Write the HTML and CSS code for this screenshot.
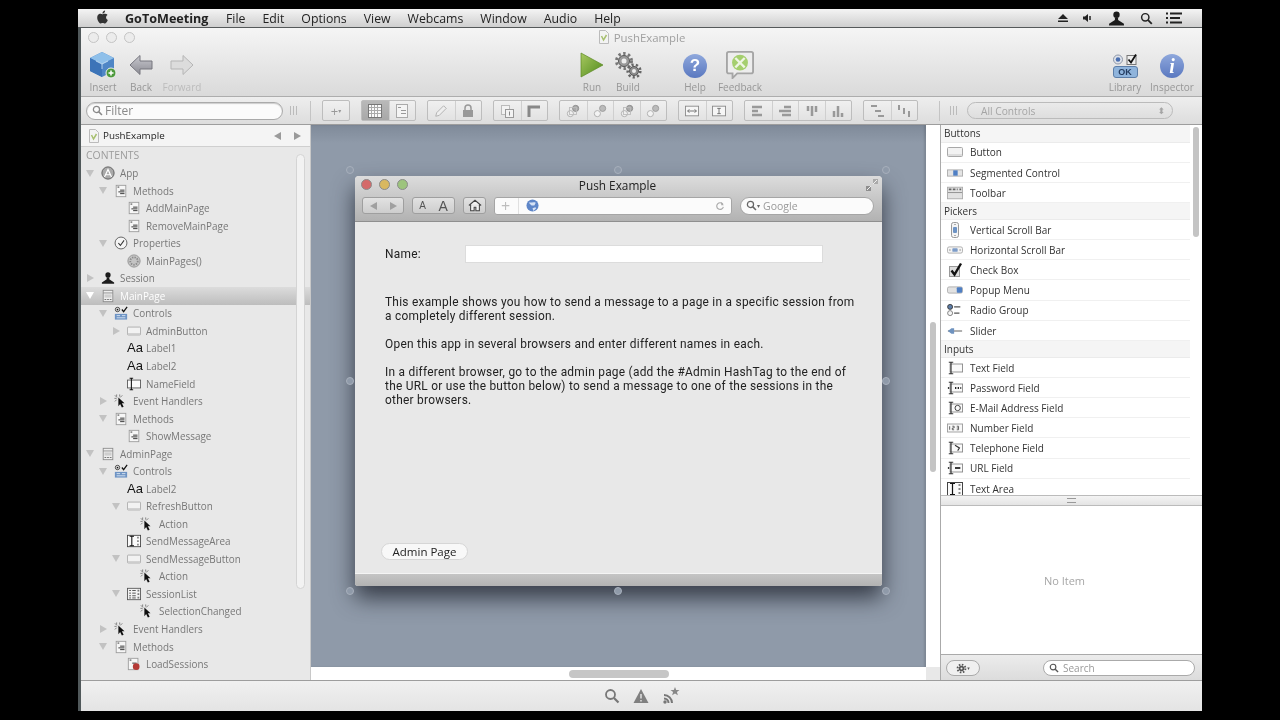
FILE: index.html
```html
<!DOCTYPE html>
<html lang="en">
  <head>
    <meta charset="UTF-8" />
    <title>PushExample</title>
    <link rel="stylesheet" href="styles.css">
  </head>
  <body>
    <!-- shared icons -->
    <svg class="defs" width="0" height="0">
      <defs>
        <linearGradient id="g-green" x1="0" y1="0" x2="1" y2="1"><stop offset="0" stop-color="#a8c860"/><stop offset="1" stop-color="#4f8a1c"/></linearGradient>
        <linearGradient id="g-arrow" x1="0" y1="0" x2="0" y2="1"><stop offset="0" stop-color="#c9c9cf"/><stop offset="1" stop-color="#8b8b93"/></linearGradient>
      </defs>
      <symbol id="i-apple" viewBox="0 0 16 16"><path d="M11.182.008C11.148-.03 9.923.023 8.857 1.18c-1.066 1.156-.902 2.482-.878 2.516s1.52.087 2.475-1.258.762-2.391.728-2.43m3.314 11.733c-.048-.096-2.325-1.234-2.113-3.422s1.675-2.789 1.698-2.854-.597-.79-1.254-1.157a3.7 3.7 0 0 0-1.563-.434c-.108-.003-.483-.095-1.254.116-.508.139-1.653.589-1.968.607-.316.018-1.256-.522-2.267-.665-.647-.1-1.333.105-1.824.303-.49.196-1.422.754-2.074 2.237-.652 1.482-.311 3.83-.067 4.56s.625 1.924 1.273 2.796c.576.984 1.34 1.667 1.659 1.899s1.219.386 1.843.067c.502-.308 1.408-.485 1.766-.472.357.013 1.061.154 1.782.539.571.197 1.111.115 1.652-.105.541-.221 1.324-1.059 2.238-2.758q.52-1.185.473-1.282" fill="#333"/></symbol>
      <symbol id="i-eject" viewBox="0 0 12 12"><path d="M6 2l5 5H1zM1 8.500h10V10H1z" fill="#222"/></symbol>
      <symbol id="i-volume" viewBox="0 0 12 12"><path d="M1 4.500h2L6 2v8L3 7.500H1z" fill="#222"/><path d="M8 4v4" stroke="#222" stroke-width="1.500"/></symbol>
      <symbol id="i-person" viewBox="0 0 16 16"><circle cx="8" cy="4.500" r="3" fill="#1c1c1c"/><path d="M6.500 7h3v2.500L15 13v1.500H1V13l5.500-3.500z" fill="#1c1c1c"/></symbol>
      <symbol id="i-search" viewBox="0 0 16 16"><circle cx="6.500" cy="6.500" r="4.500" fill="none" stroke="currentColor" stroke-width="1.800"/><path d="M10 10l4.500 4.500" stroke="currentColor" stroke-width="2.200"/></symbol>
      <symbol id="i-lines" viewBox="0 0 18 12"><path d="M1 1.500h2M5 1.500h12M1 6h2M5 6h10M1 10.500h2M5 10.500h12" stroke="#222" stroke-width="2"/></symbol>
      <symbol id="i-doc" viewBox="0 0 12 14"><path d="M1.500.500h6l3 3v10h-9z" fill="#f3f3f3" stroke="#bbb"/><path d="M3.500 6l2 4 3-5" fill="none" stroke="#a8c070" stroke-width="1.500"/></symbol>

      <symbol id="i-cube" viewBox="0 0 28 28"><path d="M13 1L25 7v13l-12 6-12-6V7z" fill="#4f86c6"/><path d="M13 1L25 7l-12 6L1 7z" fill="#8fc0ea"/><path d="M1 7l12 6v13L1 20z" fill="#3c74b8"/><path d="M13 13v5M13 13l-6-3M13 13l6-3" stroke="#cfe6f7" stroke-width=".8"/><circle cx="22" cy="22" r="5" fill="#4d9a3c" stroke="#eee"/><path d="M22 19.500v5M19.500 22h5" stroke="#fff" stroke-width="1.500"/></symbol>
      <symbol id="i-back" viewBox="0 0 24 22"><path d="M1 11L11 1.500V7h12v8H11v5.500z" fill="url(#g-arrow)" stroke="#77777f"/></symbol>
      <symbol id="i-forward" viewBox="0 0 24 22"><path d="M23 11L13 1.500V7H1v8h12v5.500z" fill="#dcdcdc" stroke="#b5b5b5"/></symbol>
      <symbol id="i-run" viewBox="0 0 24 26"><path d="M1 1l22 12L1 25z" fill="url(#g-green)" stroke="#5c8a24" stroke-width=".7"/></symbol>
      <symbol id="i-gears" viewBox="0 0 30 28"><circle cx="11" cy="10" r="5.500" fill="#9a9a9a" stroke="#555" stroke-width="1"/><circle cx="11" cy="10" r="7.500" fill="none" stroke="#777" stroke-width="3" stroke-dasharray="2.400 2.500"/><circle cx="11" cy="10" r="2.500" fill="#eee"/><circle cx="21" cy="20" r="4.500" fill="#8d8d8d" stroke="#555"/><circle cx="21" cy="20" r="6.300" fill="none" stroke="#666" stroke-width="2.600" stroke-dasharray="2.200 2.200"/><circle cx="21" cy="20" r="2" fill="#eee"/></symbol>
      <symbol id="i-feedback" viewBox="0 0 30 30"><path d="M3 1h24a2 2 0 0 1 2 2v19a2 2 0 0 1-2 2H12l-5 5v-5H3a2 2 0 0 1-2-2V3a2 2 0 0 1 2-2z" fill="#ededed" stroke="#a5a5a5" stroke-width="2"/><circle cx="15" cy="12.500" r="8.500" fill="#a5cf6e"/><path d="M10 7.500l10 10M20 7.500l-10 10" stroke="#eef5e2" stroke-width="2.500"/></symbol>
      <symbol id="i-library" viewBox="0 0 26 11"><circle cx="6" cy="5.500" r="4.500" fill="#dfe3ea" stroke="#8c96a8"/><circle cx="6" cy="5.500" r="2.300" fill="#4a6fb0"/><rect x="15" y="1.500" width="9" height="9" fill="#eee" stroke="#777"/><path d="M16.500 5.500l2.500 3L24 .500" fill="none" stroke="#111" stroke-width="1.800"/></symbol>

      <symbol id="t-app" viewBox="0 0 16 16"><circle cx="8" cy="8" r="7" fill="#a9a9a9" stroke="#555"/><path d="M4 12.500L8 4l4 8.500M5.500 10h5" fill="none" stroke="#fff" stroke-width="1.400"/></symbol>
      <symbol id="t-method" viewBox="0 0 16 16"><rect x="2.500" y="1.500" width="11" height="13" fill="#f6f6f6" stroke="#9a9a9a"/><path d="M4 3.500h2M7 7h5M5 9h7M7 11h5" stroke="#222"/></symbol>
      <symbol id="t-method-red" viewBox="0 0 16 16"><rect x="1.500" y="1.500" width="11" height="13" fill="#f6f6f6" stroke="#9a9a9a"/><path d="M3 3.500h2M6 7h5" stroke="#222"/><circle cx="10.500" cy="11" r="3.800" fill="#b53a36"/></symbol>
      <symbol id="t-check" viewBox="0 0 16 16"><circle cx="8" cy="8" r="6.800" fill="#f4f4f4" stroke="#555"/><path d="M5 8l2.300 2.800L11.500 5" fill="none" stroke="#333" stroke-width="1.200"/></symbol>
      <symbol id="t-gear" viewBox="0 0 16 16"><circle cx="8" cy="8" r="7" fill="#c4c4c4" stroke="#909090"/><circle cx="8" cy="8" r="4.300" fill="none" stroke="#8a8a8a" stroke-width="2" stroke-dasharray="1.600 1.300"/></symbol>
      <symbol id="t-page" viewBox="0 0 16 16"><rect x="2.500" y="1.500" width="11" height="13" fill="#eee" stroke="#8a8a8a"/><path d="M2.500 4.500h11" stroke="#8a8a8a"/><path d="M4 7h8M4 9h8" stroke="#b5b5b5"/><path d="M4 12h2M7 12h2M10 12h2" stroke="#666"/></symbol>
      <symbol id="t-controls" viewBox="0 0 16 16"><circle cx="4" cy="4" r="2.500" fill="#eee" stroke="#333"/><circle cx="4" cy="4" r="1" fill="#111"/><path d="M9 4l2 2.500L15 1" fill="none" stroke="#111" stroke-width="1.400"/><rect x="1" y="9" width="14" height="6.500" fill="#6d93c4"/><path d="M3 11h4M9 11h4M3 13.500h10" stroke="#dfe9f5"/></symbol>
      <symbol id="t-button" viewBox="0 0 16 16"><rect x=".500" y="3.500" width="15" height="9" rx="1" fill="#f2f2f2" stroke="#a8a8a8"/><path d="M1 11h14" stroke="#c8c8c8"/></symbol>
      <symbol id="t-field" viewBox="0 0 16 16"><rect x=".500" y="3.500" width="15" height="9" fill="#fafafa" stroke="#555"/><path d="M3 1.500h4M3 14.500h4M5 1.500v13" stroke="#111" stroke-width="1.200"/></symbol>
      <symbol id="t-area" viewBox="0 0 16 16"><rect x=".500" y="1.500" width="15" height="13" fill="#fafafa" stroke="#444"/><path d="M3 2.500h5M3 13.500h5M5.500 2.500v11" stroke="#111" stroke-width="1.200"/><path d="M12.500 3v10" stroke="#888" stroke-width="2" stroke-dasharray="2 2"/></symbol>
      <symbol id="t-list" viewBox="0 0 16 16"><rect x=".500" y="1.500" width="15" height="13" fill="#f2f2f2" stroke="#555"/><path d="M2.500 4h2M6 4h4M2.500 7h2M6 7h4M2.500 10h2M6 10h4M2.500 12.500h2M6 12.500h4" stroke="#444"/><path d="M13 3v10" stroke="#777" stroke-width="2" stroke-dasharray="2 2"/></symbol>
      <symbol id="t-event" viewBox="0 0 16 16"><path d="M3 .500v2.500M.500 5H3M1 1.500l2.500 2.500M6.500 .500V3M9.500 1.500L7 4M1 8.500L3 6.500" stroke="#777"/><path d="M5 4l7 6.500H9l2 4-2 1-2-4-2 2.500z" fill="#111"/></symbol>

      <symbol id="l-seg" viewBox="0 0 18 12"><rect x=".500" y="2.500" width="17" height="7" fill="#e4e4e4" stroke="#aaa"/><rect x="7" y="3" width="5" height="6" fill="#4f7fc4"/></symbol>
      <symbol id="l-toolbar" viewBox="0 0 18 14"><rect x=".500" y=".500" width="17" height="13" fill="#e2e2e2" stroke="#aaa"/><path d="M2 3h3M6.500 3h3M11 3h1M14 3h2" stroke="#666" stroke-width="2"/><path d="M1 6.500h16" stroke="#888"/></symbol>
      <symbol id="l-vscroll" viewBox="0 0 12 16"><rect x="2.500" y=".500" width="7" height="15" rx="2" fill="#f4f4f4" stroke="#999"/><rect x="4" y="5" width="4" height="6" rx="1" fill="#6d93c4"/><path d="M6 2v1M6 13v1" stroke="#666"/></symbol>
      <symbol id="l-hscroll" viewBox="0 0 18 10"><rect x=".500" y="1.500" width="17" height="7" rx="2" fill="#f4f4f4" stroke="#aaa"/><rect x="6" y="3" width="6" height="4" rx="1" fill="#7d9cc8"/><path d="M2.500 5h1.500M14 5h1.500" stroke="#666"/></symbol>
      <symbol id="l-checkbox" viewBox="0 0 16 16"><rect x="2.500" y="4.500" width="10" height="10" fill="#ddd" stroke="#999"/><path d="M4.500 8.500l3 4L14 1.500" fill="none" stroke="#111" stroke-width="2.400"/></symbol>
      <symbol id="l-popup" viewBox="0 0 18 12"><rect x=".500" y="2.500" width="17" height="7" rx="2" fill="#e2e2e2" stroke="#aaa"/><rect x="11" y="3" width="6" height="6" rx="1" fill="#4f7fc4"/></symbol>
      <symbol id="l-radio" viewBox="0 0 18 14"><circle cx="3.500" cy="3.500" r="2.800" fill="#5d7da8" stroke="#333"/><circle cx="3.500" cy="10.500" r="2.800" fill="#f5f5f5" stroke="#777"/><path d="M8 3.500h7M8 10.500h6" stroke="#555" stroke-width="1.500"/></symbol>
      <symbol id="l-slider" viewBox="0 0 18 10"><path d="M1 5h16" stroke="#888" stroke-width="1.500"/><path d="M1 5l4-3h3v6H5z" fill="#6f93bf"/></symbol>
      <symbol id="l-field" viewBox="0 0 18 16"><rect x="3.500" y="3.500" width="14" height="9" fill="#fafafa" stroke="#888"/><path d="M2 1.500h5M2 14.500h5M4.500 1.500v13" stroke="#333" stroke-width="1.300"/></symbol>
      <symbol id="l-password" viewBox="0 0 18 16"><rect x="3.500" y="3.500" width="14" height="9" fill="#fafafa" stroke="#888"/><path d="M2 1.500h5M2 14.500h5M4.500 1.500v13" stroke="#333" stroke-width="1.300"/><path d="M9 8h1.500M12 8h1.500M15 8h1" stroke="#222" stroke-width="2"/><path d="M1 8h1.500" stroke="#222" stroke-width="2"/></symbol>
      <symbol id="l-email" viewBox="0 0 18 16"><rect x="3.500" y="3.500" width="14" height="9" fill="#fafafa" stroke="#888"/><path d="M2 1.500h5M2 14.500h5M4.500 1.500v13" stroke="#333" stroke-width="1.300"/><circle cx="12" cy="8" r="3" fill="none" stroke="#333"/></symbol>
      <symbol id="l-number" viewBox="0 0 18 12"><rect x=".500" y="1.500" width="17" height="9" fill="#f8f8f8" stroke="#999"/><path d="M3 4v4M6 4h2v2H6v2h2M11 4h2v2h-2M11 8h2v-2" fill="none" stroke="#555"/></symbol>
      <symbol id="l-tel" viewBox="0 0 18 16"><rect x="3.500" y="3.500" width="14" height="9" fill="#fafafa" stroke="#888"/><path d="M2 1.500h5M2 14.500h5M4.500 1.500v13" stroke="#333" stroke-width="1.300"/><path d="M9 5l5 3-2 3" fill="none" stroke="#333" stroke-width="1.300"/></symbol>
      <symbol id="l-url" viewBox="0 0 18 16"><rect x="3.500" y="3.500" width="14" height="9" fill="#fafafa" stroke="#888"/><path d="M2 1.500h5M2 14.500h5M4.500 1.500v13" stroke="#333" stroke-width="1.300"/><path d="M9 8h6" stroke="#222" stroke-width="2"/><path d="M1 8h1.500" stroke="#222" stroke-width="2"/></symbol>

      <symbol id="s-grid" viewBox="0 0 14 14"><rect x=".500" y=".500" width="13" height="13" fill="#fafafa" stroke="#777"/><path d="M3.500 1v12M6.500 1v12M9.500 1v12M1 3.500h12M1 6.500h12M1 9.500h12" stroke="#aaa"/></symbol>
      <symbol id="s-list" viewBox="0 0 14 14"><rect x="1.500" y=".500" width="11" height="13" fill="#f4f4f4" stroke="#aaa"/><path d="M3 3.500h3M6 6.500h5M6 9.500h5" stroke="#999"/></symbol>
      <symbol id="s-pencil" viewBox="0 0 16 16"><path d="M2 14l1-4 8-8 3 3-8 8z" fill="#eee" stroke="#aaa"/></symbol>
      <symbol id="s-lock" viewBox="0 0 14 14"><rect x="2" y="6" width="10" height="7" fill="#999"/><path d="M4 6V4a3 3 0 0 1 6 0v2" fill="none" stroke="#999" stroke-width="1.500"/></symbol>
      <symbol id="s-insert" viewBox="0 0 14 14"><rect x="1.500" y="1.500" width="8" height="9" fill="#f3f3f3" stroke="#bbb"/><rect x="5.500" y="5.500" width="8" height="8" fill="#f3f3f3" stroke="#999"/><path d="M9.500 7.500v4" stroke="#888"/></symbol>
      <symbol id="s-corner" viewBox="0 0 14 14"><path d="M2 13V3h11" fill="none" stroke="#888" stroke-width="3"/></symbol>
      <symbol id="s-front" viewBox="0 0 16 16"><circle cx="5" cy="11" r="3.500" fill="#eee" stroke="#aaa"/><circle cx="11" cy="5" r="3.500" fill="#aaa" stroke="#888"/><rect x="4" y="4" width="8" height="8" fill="none" stroke="#bbb"/></symbol>
      <symbol id="s-back" viewBox="0 0 16 16"><circle cx="5" cy="11" r="3.500" fill="#f3f3f3" stroke="#aaa"/><circle cx="11" cy="5" r="3.500" fill="#bbb" stroke="#999"/></symbol>
      <symbol id="s-hsize" viewBox="0 0 16 12"><rect x=".500" y=".500" width="15" height="11" fill="#f6f6f6" stroke="#888"/><path d="M3 6h10M3 6l2-2M3 6l2 2M13 6l-2-2M13 6l-2 2" fill="none" stroke="#666"/></symbol>
      <symbol id="s-vsize" viewBox="0 0 16 12"><rect x=".500" y=".500" width="15" height="11" fill="#f6f6f6" stroke="#888"/><path d="M6 3h4M8 3v6M6 9h4" fill="none" stroke="#666"/></symbol>
      <symbol id="s-alignl" viewBox="0 0 14 14"><path d="M1 3h10M1 7h6M1 11h10" stroke="#999" stroke-width="2.500"/></symbol>
      <symbol id="s-alignc" viewBox="0 0 14 14"><path d="M6 3h7M1 7h12M4 11h9" stroke="#999" stroke-width="2.500"/></symbol>
      <symbol id="s-alignt" viewBox="0 0 14 14"><path d="M3 2v5M7 2v10M11 2v6" stroke="#999" stroke-width="2.500"/></symbol>
      <symbol id="s-alignb" viewBox="0 0 14 14"><path d="M3 13V7M7 13V2M11 13V9" stroke="#999" stroke-width="2.500"/></symbol>
      <symbol id="s-stepd" viewBox="0 0 14 14"><path d="M1 2h6M5 7h6M8 12h6" stroke="#999" stroke-width="2"/></symbol>
      <symbol id="s-stepr" viewBox="0 0 14 14"><path d="M2 1v5M7 4v6M12 7v6" stroke="#999" stroke-width="2"/></symbol>

      <symbol id="w-home" viewBox="0 0 16 14"><path d="M1 7l7-6 7 6M3 6v7h4V9h2v4h4V6" fill="#f2f2f2" stroke="#444" stroke-width="1.200"/></symbol>
      <symbol id="w-globe" viewBox="0 0 14 14"><circle cx="7" cy="7" r="6.500" fill="#5e86c8"/><path d="M3 3.500c2 1 5-1 7.500.5L9 7H6L4 5z" fill="#d6e2f5"/><path d="M7 10l3-1 1 1-3 3z" fill="#d6e2f5"/></symbol>
      <symbol id="w-reload" viewBox="0 0 12 12"><path d="M9.500 4a4 4 0 1 0 .5 3" fill="none" stroke="#aaa" stroke-width="1.400"/><path d="M7.500 1v4h3z" fill="#aaa"/></symbol>
      <symbol id="w-resize" viewBox="0 0 14 14"><rect x="1" y="8" width="5" height="5" fill="#8e8e8e"/><rect x="8" y="1" width="5" height="5" fill="#aaa"/><path d="M2 12l4-4M8 6l4-4" stroke="#eee"/></symbol>
      <symbol id="b-gear" viewBox="0 0 14 14"><circle cx="7" cy="7" r="3.500" fill="#555"/><circle cx="7" cy="7" r="5" fill="none" stroke="#555" stroke-width="2.400" stroke-dasharray="2 1.900"/><circle cx="7" cy="7" r="1.300" fill="#eee"/></symbol>
      <symbol id="b-warn" viewBox="0 0 16 16"><path d="M8 1l7.500 14H.5z" fill="#808080"/><path d="M8 6v4.500M8 12v1.500" stroke="#e8e8e8" stroke-width="1.400"/></symbol>
      <symbol id="b-feed" viewBox="0 0 18 18"><path d="M2 8a8 8 0 0 1 8 8M2 11.500A4.500 4.500 0 0 1 6.500 16" fill="none" stroke="#777" stroke-width="2"/><circle cx="3" cy="15" r="1.700" fill="#777"/><path d="M13 0l1.200 3h3.300l-2.600 2 1 3.300L13 6.500l-2.900 1.800 1-3.300-2.600-2h3.300z" fill="#888"/></symbol>
    </svg>

    <div class="screen">
      <div class="menubar">
        <svg class="apple"><use href="#i-apple"/></svg>
        <span class="menu-app">GoToMeeting</span>
        <span>File</span>
        <span>Edit</span>
        <span>Options</span>
        <span>View</span>
        <span>Webcams</span>
        <span>Window</span>
        <span>Audio</span>
        <span>Help</span>
        <div class="menu-status">
          <svg class="st-eject"><use href="#i-eject"/></svg>
          <svg class="st-volume"><use href="#i-volume"/></svg>
          <svg class="st-person"><use href="#i-person"/></svg>
          <svg class="st-search"><use href="#i-search"/></svg>
          <svg class="st-lines"><use href="#i-lines"/></svg>
        </div>
      </div>

      <div class="window">
        <div class="toolbar">
          <div class="titlebar">
            <div class="lights"><i></i><i></i><i></i></div>
            <svg class="title-doc"><use href="#i-doc"/></svg>
            <span>PushExample</span>
          </div>
          <div class="tools">
            <div class="tool w-insert"><svg class="ti-cube"><use href="#i-cube"/></svg><span>Insert</span></div>
            <div class="tool w-back"><svg class="ti-arrow"><use href="#i-back"/></svg><span>Back</span></div>
            <div class="tool w-forward off"><svg class="ti-arrow"><use href="#i-forward"/></svg><span>Forward</span></div>
            <div class="tool w-run"><svg class="ti-run"><use href="#i-run"/></svg><span>Run</span></div>
            <div class="tool w-build"><svg class="ti-gears"><use href="#i-gears"/></svg><span>Build</span></div>
            <div class="tool w-help"><div class="round">?</div><span>Help</span></div>
            <div class="tool w-feedback"><svg class="ti-feedback"><use href="#i-feedback"/></svg><span>Feedback</span></div>
            <div class="tool w-library">
              <svg class="ti-library"><use href="#i-library"/></svg>
              <div class="ok-icon">OK</div>
              <span>Library</span>
            </div>
            <div class="tool w-inspector"><div class="round round-i">i</div><span>Inspector</span></div>
          </div>
        </div>

        <div class="strip">
          <div class="filter"><svg class="filter-icon"><use href="#i-search"/></svg>Filter</div>
          <div class="grip"></div>
          <div class="strip-sep"></div>
          <div class="btn-groups">
            <div class="btn-group"><div class="seg seg-wide">+<small>▾</small></div></div>
            <div class="btn-group">
              <div class="seg seg-on"><svg><use href="#s-grid"/></svg></div>
              <div class="seg"><svg><use href="#s-list"/></svg></div>
            </div>
            <div class="btn-group">
              <div class="seg"><svg><use href="#s-pencil"/></svg></div>
              <div class="seg"><svg><use href="#s-lock"/></svg></div>
            </div>
            <div class="btn-group">
              <div class="seg"><svg><use href="#s-insert"/></svg></div>
              <div class="seg"><svg><use href="#s-corner"/></svg></div>
            </div>
            <div class="btn-group">
              <div class="seg"><svg><use href="#s-front"/></svg></div>
              <div class="seg"><svg><use href="#s-back"/></svg></div>
              <div class="seg"><svg><use href="#s-front"/></svg></div>
              <div class="seg"><svg><use href="#s-back"/></svg></div>
            </div>
            <div class="btn-group">
              <div class="seg"><svg><use href="#s-hsize"/></svg></div>
              <div class="seg"><svg><use href="#s-vsize"/></svg></div>
            </div>
            <div class="btn-group">
              <div class="seg"><svg><use href="#s-alignl"/></svg></div>
              <div class="seg"><svg><use href="#s-alignc"/></svg></div>
              <div class="seg"><svg><use href="#s-alignt"/></svg></div>
              <div class="seg"><svg><use href="#s-alignb"/></svg></div>
            </div>
            <div class="btn-group">
              <div class="seg"><svg><use href="#s-stepd"/></svg></div>
              <div class="seg"><svg><use href="#s-stepr"/></svg></div>
            </div>
          </div>
          <div class="strip-sep strip-sep-right"></div>
          <div class="grip grip-right"></div>
          <div class="controls-popup"><span>All Controls</span><b>⬍</b></div>
        </div>

        <div class="main">
          <div class="sidebar">
            <div class="sidebar-head">
              <svg class="head-doc"><use href="#i-doc"/></svg>
              <span>PushExample</span>
              <div class="head-nav"><i class="nav-l"></i><i class="nav-r"></i></div>
            </div>
            <div class="contents">CONTENTS</div>
            <div class="tree">
              <div class="row d0"><i class="open"></i><svg><use href="#t-app"/></svg><span>App</span></div>
              <div class="row d1"><i class="open"></i><svg><use href="#t-method"/></svg><span>Methods</span></div>
              <div class="row d2"><i></i><svg><use href="#t-method"/></svg><span>AddMainPage</span></div>
              <div class="row d2"><i></i><svg><use href="#t-method"/></svg><span>RemoveMainPage</span></div>
              <div class="row d1"><i class="open"></i><svg><use href="#t-check"/></svg><span>Properties</span></div>
              <div class="row d2"><i></i><svg><use href="#t-gear"/></svg><span>MainPages()</span></div>
              <div class="row d0"><i class="closed"></i><svg><use href="#i-person"/></svg><span>Session</span></div>
              <div class="row d0 selected"><i class="open"></i><svg><use href="#t-page"/></svg><span>MainPage</span></div>
              <div class="row d1"><i class="open"></i><svg><use href="#t-controls"/></svg><span>Controls</span></div>
              <div class="row d2"><i class="closed"></i><svg><use href="#t-button"/></svg><span>AdminButton</span></div>
              <div class="row d2"><i></i><b class="aa">Aa</b><span>Label1</span></div>
              <div class="row d2"><i></i><b class="aa">Aa</b><span>Label2</span></div>
              <div class="row d2"><i></i><svg><use href="#t-field"/></svg><span>NameField</span></div>
              <div class="row d1"><i class="closed"></i><svg><use href="#t-event"/></svg><span>Event Handlers</span></div>
              <div class="row d1"><i class="open"></i><svg><use href="#t-method"/></svg><span>Methods</span></div>
              <div class="row d2"><i></i><svg><use href="#t-method"/></svg><span>ShowMessage</span></div>
              <div class="row d0"><i class="open"></i><svg><use href="#t-page"/></svg><span>AdminPage</span></div>
              <div class="row d1"><i class="open"></i><svg><use href="#t-controls"/></svg><span>Controls</span></div>
              <div class="row d2"><i></i><b class="aa">Aa</b><span>Label2</span></div>
              <div class="row d2"><i class="open"></i><svg><use href="#t-button"/></svg><span>RefreshButton</span></div>
              <div class="row d3"><i></i><svg><use href="#t-event"/></svg><span>Action</span></div>
              <div class="row d2"><i></i><svg><use href="#t-area"/></svg><span>SendMessageArea</span></div>
              <div class="row d2"><i class="open"></i><svg><use href="#t-button"/></svg><span>SendMessageButton</span></div>
              <div class="row d3"><i></i><svg><use href="#t-event"/></svg><span>Action</span></div>
              <div class="row d2"><i class="open"></i><svg><use href="#t-list"/></svg><span>SessionList</span></div>
              <div class="row d3"><i></i><svg><use href="#t-event"/></svg><span>SelectionChanged</span></div>
              <div class="row d1"><i class="closed"></i><svg><use href="#t-event"/></svg><span>Event Handlers</span></div>
              <div class="row d1"><i class="open"></i><svg><use href="#t-method"/></svg><span>Methods</span></div>
              <div class="row d2"><i></i><svg><use href="#t-method-red"/></svg><span>LoadSessions</span></div>
            </div>
            <div class="tree-scroll"></div>
          </div>

          <div class="center">
            <div class="center-top">
              <div class="canvas">
                <div class="selection">
                  <i class="h h-tl"></i><i class="h h-tc"></i><i class="h h-tr"></i>
                  <i class="h h-ml"></i><i class="h h-mr"></i>
                  <i class="h h-bl"></i><i class="h h-bc"></i><i class="h h-br"></i>
                </div>
                <div class="webwin">
                  <div class="webwin-top">
                    <div class="webwin-title">
                      <div class="web-lights"><i class="red"></i><i class="yellow"></i><i class="green"></i></div>
                      <span>Push Example</span>
                      <svg class="web-resize"><use href="#w-resize"/></svg>
                    </div>
                    <div class="webwin-bar">
                      <div class="wb wb-nav"><i class="wnav-l"></i><i class="wnav-r"></i></div>
                      <div class="wb wb-font"><span>A</span><span class="big">A</span></div>
                      <div class="wb wb-home"><svg><use href="#w-home"/></svg></div>
                      <div class="url">
                        <span class="url-plus">+</span>
                        <svg class="url-globe"><use href="#w-globe"/></svg>
                        <svg class="url-reload"><use href="#w-reload"/></svg>
                      </div>
                      <div class="google"><svg><use href="#i-search"/></svg><small>▾</small><span>Google</span></div>
                    </div>
                  </div>
                  <div class="webwin-body">
                    <div class="name-row"><label>Name:</label><div class="name-input"></div></div>
                    <p class="first">This example shows you how to send a message to a page in a specific session from<br>a completely different session.</p>
                    <p>Open this app in several browsers and enter different names in each.</p>
                    <p>In a different browser, go to the admin page (add the #Admin HashTag to the end of<br>the URL or use the button below) to send a message to one of the sessions in the<br>other browsers.</p>
                    <div class="admin-btn">Admin Page</div>
                  </div>
                  <div class="webwin-foot"></div>
                </div>
              </div>
              <div class="vscroll"><div class="vthumb"></div></div>
            </div>
            <div class="hscroll"><div class="hthumb"></div></div>
          </div>

          <div class="library">
            <div class="lib-list">
              <div class="lib-head">Buttons</div>
              <div class="lib-row"><svg><use href="#t-button"/></svg>Button</div>
              <div class="lib-row"><svg><use href="#l-seg"/></svg>Segmented Control</div>
              <div class="lib-row"><svg><use href="#l-toolbar"/></svg>Toolbar</div>
              <div class="lib-head">Pickers</div>
              <div class="lib-row"><svg><use href="#l-vscroll"/></svg>Vertical Scroll Bar</div>
              <div class="lib-row"><svg><use href="#l-hscroll"/></svg>Horizontal Scroll Bar</div>
              <div class="lib-row"><svg><use href="#l-checkbox"/></svg>Check Box</div>
              <div class="lib-row"><svg><use href="#l-popup"/></svg>Popup Menu</div>
              <div class="lib-row"><svg><use href="#l-radio"/></svg>Radio Group</div>
              <div class="lib-row"><svg><use href="#l-slider"/></svg>Slider</div>
              <div class="lib-head">Inputs</div>
              <div class="lib-row"><svg><use href="#l-field"/></svg>Text Field</div>
              <div class="lib-row"><svg><use href="#l-password"/></svg>Password Field</div>
              <div class="lib-row"><svg><use href="#l-email"/></svg>E-Mail Address Field</div>
              <div class="lib-row"><svg><use href="#l-number"/></svg>Number Field</div>
              <div class="lib-row"><svg><use href="#l-tel"/></svg>Telephone Field</div>
              <div class="lib-row"><svg><use href="#l-url"/></svg>URL Field</div>
              <div class="lib-row"><svg><use href="#t-area"/></svg>Text Area</div>
              <div class="lib-thumb"></div>
            </div>
            <div class="lib-divider"><i></i></div>
            <div class="lib-empty">No Item</div>
            <div class="lib-bottom">
              <div class="gear-btn"><svg><use href="#b-gear"/></svg><small>▾</small></div>
              <div class="lib-search"><svg><use href="#i-search"/></svg>Search</div>
            </div>
          </div>
        </div>

        <div class="statusbar">
          <svg class="sb-search"><use href="#i-search"/></svg>
          <svg class="sb-warn"><use href="#b-warn"/></svg>
          <svg class="sb-feed"><use href="#b-feed"/></svg>
        </div>
      </div>
    </div>
  </body>
</html>
```

FILE: styles.css
```css
* {
  margin: 0;
  padding: 0;
  box-sizing: border-box;
}

html,
body {
  height: 720px;
  overflow: hidden;
  background-color: #000;
  font-family: "Open Sans", "DejaVu Sans", sans-serif;
}

.defs {
  position: absolute;
}

.screen {
  width: 1124px;
  height: 702px;
  margin: 9px 78px;
  display: flex;
  flex-direction: column;
  overflow: hidden;
  filter: blur(0.3px);
}

/* menu bar */
.menubar {
  height: 19px;
  display: flex;
  align-items: center;
  gap: 17px;
  padding-left: 18px;
  font-size: 12.3px;
  color: #222;
  background: linear-gradient(#f4f4f4, #cfcfcf);
  border-bottom: 1px solid #55595a;
}

.apple {
  width: 13px;
  height: 14px;
  margin-right: -1px;
  margin-top: -2px;
}

.menu-app {
  font-weight: 700;
  width: 84px;
  font-size: 12.6px;
  white-space: nowrap;
}

.menu-status {
  margin-left: auto;
  display: flex;
  align-items: center;
  padding-right: 19px;
}

.st-eject {
  width: 12px;
  height: 12px;
}

.st-volume {
  width: 12px;
  height: 12px;
  margin-left: 13px;
}

.st-person {
  width: 17px;
  height: 17px;
  margin-left: 14px;
}

.st-search {
  width: 13px;
  height: 13px;
  margin-left: 15px;
  color: #222;
}

.st-lines {
  width: 18px;
  height: 12px;
  margin-left: 12px;
}

.window {
  flex: 1;
  display: flex;
  flex-direction: column;
  border-left: 3px solid #50585a;
  background-color: #e8e8e8;
  min-height: 0;
}

/* main toolbar */
.toolbar {
  height: 69px;
  background: linear-gradient(#f5f5f5, #dadada);
  border-bottom: 1px solid #adadad;
}

.titlebar {
  height: 20px;
  position: relative;
  display: flex;
  align-items: center;
  justify-content: center;
  padding-bottom: 2px;
  font-size: 11.4px;
  color: #a0a0a0;
}

.lights {
  position: absolute;
  left: 7px;
  top: 4px;
  display: flex;
  gap: 7px;
}

.lights i {
  width: 11px;
  height: 11px;
  border-radius: 50%;
  border: 1px solid #c4c4c4;
  background-color: #ececec;
}

.title-doc {
  width: 12px;
  height: 14px;
  margin-right: 4px;
}

.tools {
  display: flex;
  padding-left: 3px;
}

.tool {
  height: 48px;
  display: flex;
  flex-direction: column;
  align-items: center;
  justify-content: flex-end;
  padding-bottom: 2px;
  font-size: 10px;
  line-height: 13px;
  color: #979797;
  white-space: nowrap;
}

.tool svg {
  margin-bottom: 2px;
}

.tool.off {
  color: #bcbcbc;
}

.w-insert { width: 38px; }
.w-back { width: 38px; }
.w-forward { width: 44px; }
.w-run { width: 36px; margin-left: 370px; }
.w-build { width: 36px; }
.w-help { width: 42px; margin-left: 28px; }
.w-feedback { width: 48px; }
.w-library { width: 44px; margin-left: 339px; }
.w-inspector { width: 50px; }

.ti-cube { width: 28px; height: 28px; }
.ti-arrow { width: 24px; height: 22px; margin-bottom: 5px !important; }
.ti-run { width: 24px; height: 26px; margin-bottom: 3px !important; }
.ti-gears { width: 30px; height: 28px; }
.ti-feedback { width: 28px; height: 28px; }
.ti-library { width: 26px; height: 11px; margin-bottom: 1px !important; }

.round {
  width: 24px;
  height: 24px;
  margin-bottom: 3px;
  border-radius: 50%;
  text-align: center;
  font-family: "Liberation Sans", sans-serif;
  font-size: 17px;
  font-weight: 700;
  line-height: 24px;
  color: #fff;
  background: linear-gradient(#8fa8dc, #5a78c0);
}

.round-i {
  font-family: "Liberation Serif", serif;
  font-style: italic;
  font-size: 20px;
}

.ok-icon {
  width: 25px;
  height: 12px;
  margin-bottom: 3px;
  border: 1px solid #5c7ea8;
  border-radius: 3px;
  text-align: center;
  font-family: "Liberation Sans", sans-serif;
  font-size: 9px;
  font-weight: 700;
  line-height: 10px;
  color: #243c60;
  background-color: #8fb4dc;
}

/* filter and edit buttons */
.strip {
  height: 28px;
  display: flex;
  align-items: center;
  padding-left: 5px;
  background: linear-gradient(#eeeeee, #dddddd);
  border-bottom: 1px solid #9d9d9d;
  font-size: 11px;
  color: #888;
}

.filter {
  width: 197px;
  height: 18px;
  display: flex;
  align-items: center;
  gap: 2px;
  padding-left: 5px;
  font-size: 12px;
  color: #8a8a8a;
  background-color: #fbfbfb;
  border: 1px solid #aaa;
  border-radius: 9px;
  box-shadow: inset 0 1px 1px #ccc;
}

.filter-icon {
  width: 11px;
  height: 11px;
  color: #888;
}

.grip {
  width: 7px;
  height: 9px;
  margin-left: 7px;
  background: repeating-linear-gradient(90deg, #bbb 0, #bbb 1px, transparent 1px, transparent 3px);
}

.grip-right {
  margin-left: 10px;
}

.strip-sep {
  width: 1px;
  height: 20px;
  margin-left: 13px;
  background-color: #c4c4c4;
}

.strip-sep-right {
  margin-left: 21px;
}

.btn-groups {
  display: flex;
  gap: 11px;
  margin-left: 11px;
}

.btn-group {
  display: flex;
  height: 21px;
  border: 1px solid #bdbdbd;
  border-radius: 2px;
  background: linear-gradient(#f0f0f0, #e2e2e2);
}

.seg {
  width: 26.5px;
  display: flex;
  align-items: center;
  justify-content: center;
  border-left: 1px solid #cfcfcf;
  font-size: 13px;
  color: #999;
}

.seg:first-child {
  border-left: 0;
}

.seg small {
  font-size: 6px;
}

.seg svg {
  width: 14px;
  height: 14px;
}

.seg-wide {
  width: 26px;
}

.seg-on {
  background: linear-gradient(#b9b9b9, #a8a8a8);
}

.controls-popup {
  width: 206px;
  height: 17px;
  margin-left: 10px;
  display: flex;
  align-items: center;
  justify-content: space-between;
  padding: 0 7px 0 13px;
  font-size: 10.2px;
  color: #a5a5a5;
  background: linear-gradient(#eaeaea, #dedede);
  border: 1px solid #bbb;
  border-radius: 9px;
}

.controls-popup b {
  font-weight: 400;
  font-size: 9px;
}

/* three panes */
.main {
  flex: 1;
  display: flex;
  min-height: 0;
  border-bottom: 1px solid #9d9d9d;
}

.sidebar {
  width: 230px;
  position: relative;
  overflow: hidden;
  background-color: #e8e8e8;
  border-right: 1px solid #c8c8c8;
}

.sidebar-head {
  height: 22px;
  display: flex;
  align-items: center;
  padding-left: 7px;
  font-size: 9.8px;
  color: #222;
  background-color: #f4f4f4;
  border-bottom: 1px solid #cfcfcf;
}

.head-doc {
  width: 12px;
  height: 14px;
  margin-right: 3px;
}

.head-nav {
  margin-left: auto;
  display: flex;
  gap: 13px;
  padding-right: 9px;
}

.head-nav i {
  width: 0;
  height: 0;
  border-top: 4px solid transparent;
  border-bottom: 4px solid transparent;
}

.nav-l {
  border-right: 7px solid #9a9a9a;
}

.nav-r {
  border-left: 7px solid #9a9a9a;
}

.contents {
  height: 17.4px;
  line-height: 17px;
  padding-left: 5px;
  font-size: 10.4px;
  color: #9b9b9b;
}

.tree {
  font-size: 9.9px;
  color: #777;
}

.row {
  height: 17.54px;
  display: flex;
  align-items: center;
  white-space: nowrap;
}

.row i {
  width: 12px;
  display: flex;
  justify-content: center;
  flex: none;
}

.row i.open::before {
  content: "";
  border-left: 4px solid transparent;
  border-right: 4px solid transparent;
  border-top: 7px solid #c2c2c2;
}

.row i.closed::before {
  content: "";
  border-top: 4px solid transparent;
  border-bottom: 4px solid transparent;
  border-left: 7px solid #c2c2c2;
}

.row svg {
  width: 14px;
  height: 14px;
  margin: 0 5px;
  flex: none;
}

.row .aa {
  font-family: "Liberation Sans", sans-serif;
  font-weight: 400;
  font-size: 13px;
  line-height: 14px;
  color: #111;
  margin: 0 3px 0 5px;
  width: 16px;
  flex: none;
}

.d0 { padding-left: 3px; }
.d1 { padding-left: 16px; }
.d2 { padding-left: 29px; }
.d3 { padding-left: 42px; }

.selected {
  color: #fff;
  background: linear-gradient(#dcdcdc, #bdbdbd);
}

.selected i.open::before {
  border-top-color: #fff;
}

.tree-scroll {
  position: absolute;
  left: 215px;
  top: 29px;
  width: 9px;
  height: 435px;
  background-color: #f2f2f2;
  border: 1px solid #d4d4d4;
  border-radius: 5px;
}

.center {
  width: 629px;
  display: flex;
  flex-direction: column;
}

.center-top {
  flex: 1;
  display: flex;
  min-height: 0;
}

.canvas {
  width: 615px;
  position: relative;
  background-color: #8f9aa9;
  background-image: linear-gradient(#7f8a99, #8f9aa9 18px);
  box-shadow: inset -2px 0 2px rgba(0, 0, 0, 0.12);
}

/* selection handles sit on the free canvas */
.selection {
  position: absolute;
  left: 39px;
  top: 45px;
  width: 536px;
  height: 421px;
}

.h {
  position: absolute;
  width: 8px;
  height: 8px;
  margin: -4px 0 0 -4px;
  border-radius: 50%;
  border: 1.5px solid #a8b0bc;
  background-color: #8f9aa9;
  z-index: 2;
}

.h-tl { left: 0; top: 0; }
.h-tc { left: 50%; top: 0; }
.h-tr { left: 100%; top: 0; }
.h-ml { left: 0; top: 50%; }
.h-mr { left: 100%; top: 50%; }
.h-bl { left: 0; top: 100%; }
.h-bc { left: 50%; top: 100%; }
.h-br { left: 100%; top: 100%; }

/* the browser window that is being edited */
.webwin {
  position: absolute;
  left: 44px;
  top: 51px;
  width: 527px;
  height: 410px;
  display: flex;
  flex-direction: column;
  border-radius: 4px 4px 3px 3px;
  overflow: hidden;
  background-color: #e8e8e8;
  box-shadow: 0 12px 22px rgba(25, 30, 40, 0.75);
  z-index: 1;
}

.webwin-top {
  height: 46px;
  background: linear-gradient(#dcdcdc, #b2b2b2);
  border-bottom: 1px solid #8f8f8f;
}

.webwin-title {
  height: 21px;
  position: relative;
  display: flex;
  align-items: center;
  justify-content: center;
  padding: 0 2px 4px 0;
  font-size: 11.8px;
  color: #222;
}

.web-lights {
  position: absolute;
  left: 6px;
  top: 3px;
  display: flex;
  gap: 7px;
}

.web-lights i {
  width: 11px;
  height: 11px;
  border-radius: 50%;
  border: 1px solid #8a8a8a;
}

.red { background-color: #d46a6a; }
.yellow { background-color: #d9b860; }
.green { background-color: #9dc47d; }

.web-resize {
  position: absolute;
  right: 3px;
  top: 2px;
  width: 14px;
  height: 14px;
}

.webwin-bar {
  display: flex;
  align-items: center;
  padding-left: 7px;
  height: 17px;
}

.wb {
  height: 17px;
  display: flex;
  align-items: center;
  justify-content: space-around;
  border: 1px solid #9f9f9f;
  border-radius: 3px;
  background: linear-gradient(#e2e2e2, #cdcdcd);
  margin-right: 8px;
}

.wb-nav {
  width: 42px;
}

.wb-nav i {
  width: 0;
  height: 0;
  border-top: 4px solid transparent;
  border-bottom: 4px solid transparent;
}

.wnav-l { border-right: 7px solid #a0a0a0; }
.wnav-r { border-left: 7px solid #a0a0a0; }

.wb-font {
  width: 43px;
  font-family: "Liberation Sans", sans-serif;
  font-size: 10px;
  color: #555;
}

.wb-font .big {
  font-size: 14px;
}

.wb-home {
  width: 23px;
}

.wb-home svg {
  width: 14px;
  height: 13px;
}

.url {
  width: 238px;
  height: 18px;
  display: flex;
  align-items: center;
  padding-left: 6px;
  background-color: #fbfbfb;
  border: 1px solid #a5a5a5;
  border-radius: 3px;
  margin-right: 8px;
}

.url-plus {
  font-size: 16px;
  line-height: 16px;
  color: #bdbdbd;
  width: 18px;
  border-right: 1px solid #e0e0e0;
}

.url-globe {
  width: 13px;
  height: 13px;
  margin-left: 7px;
}

.url-reload {
  width: 10px;
  height: 10px;
  margin-left: auto;
  margin-right: 6px;
}

.google {
  width: 134px;
  height: 18px;
  display: flex;
  align-items: center;
  padding-left: 5px;
  font-size: 10.5px;
  color: #999;
  background-color: #fbfbfb;
  border: 1px solid #a5a5a5;
  border-radius: 9px;
}

.google svg {
  width: 11px;
  height: 11px;
  color: #666;
}

.google small {
  font-size: 6px;
  color: #666;
  margin-right: 3px;
}

.webwin-body {
  flex: 1;
  display: flex;
  flex-direction: column;
  padding-left: 30px;
  font-family: "Roboto", "Open Sans", sans-serif;
  font-size: 11.9px;
  letter-spacing: 0.26px;
  line-height: 14px;
  color: #222;
  min-height: 0;
}

.name-row {
  display: flex;
  align-items: center;
  margin-top: 23px;
  height: 18px;
}

.name-row label {
  width: 80px;
}

.name-input {
  width: 358px;
  height: 18px;
  background-color: #fff;
  border: 1px solid #dcdcdc;
}

.webwin-body p {
  margin-top: 14px;
  white-space: nowrap;
}

.webwin-body p.first {
  margin-top: 32px;
}

.admin-btn {
  margin-top: auto;
  margin-left: -4px;
  margin-bottom: 13px;
  width: 87px;
  height: 17px;
  text-align: center;
  font-family: "Open Sans", sans-serif;
  font-size: 11.5px;
  letter-spacing: 0;
  line-height: 15px;
  color: #222;
  background-color: #f8f8f8;
  border: 1px solid #d6d6d6;
  border-radius: 9px;
}

.webwin-foot {
  height: 13px;
  background: linear-gradient(#c4c4c4, #b2b2b2);
  border-top: 1px solid #f4f4f4;
}

.vscroll {
  width: 14px;
  background-color: #fff;
  padding: 197px 0 0 4px;
}

.vthumb {
  width: 6px;
  height: 150px;
  border-radius: 3px;
  background-color: #c4c4c4;
}

.hscroll {
  height: 13px;
  width: 615px;
  display: flex;
  align-items: center;
  justify-content: center;
  background-color: #fff;
}

.hthumb {
  width: 100px;
  height: 8px;
  border-radius: 4px;
  background-color: #c6c6c6;
}

/* library pane */
.library {
  width: 262px;
  display: flex;
  flex-direction: column;
  background-color: #fff;
  border-left: 1px solid #aaa;
}

.lib-list {
  height: 370px;
  position: relative;
  overflow: hidden;
  padding-right: 12px;
  font-size: 10px;
  color: #333;
}

.lib-head {
  height: 17px;
  line-height: 17px;
  padding-left: 3px;
  background-color: #f5f5f5;
  border-bottom: 1px solid #ebebeb;
}

.lib-head:first-child {
  height: 17.6px;
}

.lib-row {
  height: 20.15px;
  display: flex;
  align-items: center;
  padding: 0.6px 0 0 6px;
  border-bottom: 1px solid #f0f0f0;
}

.lib-row svg {
  width: 16px;
  height: 16px;
  margin-right: 7px;
  flex: none;
}

.lib-thumb {
  position: absolute;
  right: 3px;
  top: 2px;
  width: 6px;
  height: 110px;
  border-radius: 3px;
  background-color: #c4c4c4;
}

.lib-divider {
  height: 11px;
  display: flex;
  align-items: center;
  justify-content: center;
  background: linear-gradient(#f4f4f4, #e4e4e4);
  border-top: 1px solid #bbb;
  border-bottom: 1px solid #bbb;
}

.lib-divider i {
  width: 9px;
  height: 5px;
  border-top: 1px solid #999;
  border-bottom: 1px solid #999;
}

.lib-empty {
  flex: 1;
  display: flex;
  align-items: center;
  justify-content: center;
  padding-right: 14px;
  font-size: 11px;
  color: #a6a6a6;
}

.lib-bottom {
  height: 26px;
  display: flex;
  align-items: center;
  padding: 1px 0 0 5px;
  background: linear-gradient(#ececec, #dcdcdc);
  border-top: 1px solid #aaa;
}

.gear-btn {
  width: 34px;
  height: 16px;
  display: flex;
  align-items: center;
  justify-content: center;
  font-size: 6px;
  color: #555;
  background-color: #f0f0f0;
  border: 1px solid #aaa;
  border-radius: 8px;
}

.gear-btn svg {
  width: 11px;
  height: 11px;
}

.lib-search {
  width: 152px;
  height: 16px;
  margin-left: 63px;
  display: flex;
  align-items: center;
  gap: 4px;
  padding-left: 5px;
  font-size: 10px;
  color: #999;
  background-color: #fff;
  border: 1px solid #aaa;
  border-radius: 8px;
}

.lib-search svg {
  width: 10px;
  height: 10px;
  color: #555;
}

/* status bar */
.statusbar {
  height: 30px;
  display: flex;
  align-items: center;
  justify-content: center;
  gap: 13px;
  background: linear-gradient(#f0f0f0, #e4e4e4);
}

.sb-search {
  width: 16px;
  height: 16px;
  color: #777;
}

.sb-warn {
  width: 16px;
  height: 16px;
}

.sb-feed {
  width: 18px;
  height: 18px;
}
```
